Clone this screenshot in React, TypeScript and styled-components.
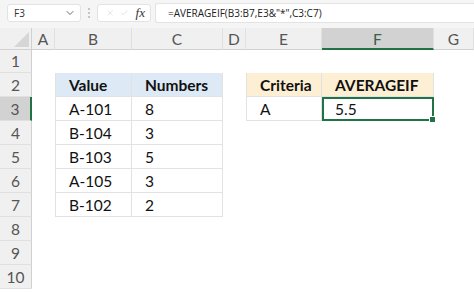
import React from 'react';
import styled, { createGlobalStyle } from 'styled-components';
import { ChevronDown, X, Check } from 'lucide-react';

const GlobalStyle = createGlobalStyle`
  html, body {
    margin: 0;
    padding: 0;
    background: #ffffff;
  }
  body {
    font-family: "Lato", "Open Sans", sans-serif;
    overflow: hidden;
  }
`;

const Window = styled.div`
  width: 474px;
  height: 292px;
  background: #ffffff;
  overflow: hidden;
`;

const Toolbar = styled.div`
  display: flex;
  align-items: center;
  height: 28px;
  padding: 0 0 0 7px;
  box-sizing: border-box;
  background: #f5f5f5;
`;

const NameBox = styled.div`
  display: flex;
  align-items: center;
  justify-content: space-between;
  width: 74px;
  height: 18px;
  box-sizing: border-box;
  padding: 0 4px 0 6px;
  background: #ffffff;
  border: 1px solid #e3e3e3;
  border-radius: 3px;
  font-family: "Open Sans", sans-serif;
  font-size: 10px;
  color: #333;
  margin-top: -2px;
`;

const Dots = styled.div`
  display: flex;
  flex-direction: column;
  gap: 2px;
  margin: -2px 7px 0 7px;

  span {
    width: 2px;
    height: 2px;
    background: #b5b5b5;
    border-radius: 1px;
  }
`;

const FuncBox = styled.div`
  display: flex;
  align-items: center;
  gap: 6px;
  width: 54px;
  height: 18px;
  box-sizing: border-box;
  padding: 0 5px 0 8px;
  background: #ffffff;
  border: 1px solid #e3e3e3;
  border-radius: 3px;
  color: #c2c2c2;
  margin-top: -2px;
`;

const Fx = styled.span`
  font-family: "Liberation Serif", serif;
  font-style: italic;
  font-size: 13px;
  color: #333;
  margin-left: 1px;
`;

const FormulaInput = styled.div`
  flex: 1;
  display: flex;
  align-items: center;
  height: 18px;
  margin-left: 4px;
  margin-top: -2px;
  padding-left: 12px;
  background: #ffffff;
  border: 1px solid #e3e3e3;
  border-right: none;
  border-radius: 3px 0 0 3px;
  font-family: "Open Sans", sans-serif;
  font-size: 10px;
  color: #222;
  white-space: nowrap;
`;

const Sheet = styled.div`
  display: grid;
  grid-template-columns: 32px 23px 77px 91px 23px 76px 112px 1fr;
  grid-template-rows: 22px 23px repeat(9, 24px);
`;

const Corner = styled.div`
  position: relative;
  background: #f0f0f0;
  border-bottom: 1px solid #d0d0d0;
  border-right: 1px solid #d0d0d0;
  box-sizing: border-box;

  &::after {
    content: '';
    position: absolute;
    right: 2px;
    bottom: 2px;
    width: 0;
    height: 0;
    border-left: 15px solid transparent;
    border-bottom: 15px solid #d6d6d6;
  }
`;

const ColHead = styled.div<{ $active?: boolean }>`
  display: flex;
  align-items: center;
  justify-content: center;
  box-sizing: border-box;
  background: ${(p) => (p.$active ? '#d2d2d2' : '#f0f0f0')};
  border-right: 1px solid #e0e0e0;
  border-bottom: ${(p) => (p.$active ? '2px solid #217346' : '1px solid #d0d0d0')};
  font-size: 15.5px;
  color: ${(p) => (p.$active ? '#3b5e48' : '#555')};
  padding-top: 1px;
`;

const RowHead = styled.div<{ $active?: boolean }>`
  display: flex;
  align-items: center;
  justify-content: center;
  box-sizing: border-box;
  background: ${(p) => (p.$active ? '#d2d2d2' : '#f0f0f0')};
  border-bottom: 1px solid #e0e0e0;
  border-right: ${(p) => (p.$active ? '2px solid #217346' : '1px solid #d0d0d0')};
  font-size: 15.5px;
  color: #555;
`;

type Tone = 'none' | 'blue' | 'orange' | 'plain';

const toneBg: Record<Tone, string> = {
  none: '#ffffff',
  blue: '#dde9f5',
  orange: '#fdefd3',
  plain: '#ffffff',
};

const Cell = styled.div<{ $tone: Tone; $bold?: boolean; $selected?: boolean; $first?: boolean }>`
  position: relative;
  display: flex;
  align-items: center;
  box-sizing: border-box;
  padding-left: 13px;
  background: ${(p) => toneBg[p.$tone]};
  font-size: 15.5px;
  font-weight: ${(p) => (p.$bold ? 700 : 400)};
  color: #111;
  border-left: ${(p) => (p.$first ? '1px solid #e2e2e2' : 'none')};
  border-right: ${(p) => (p.$tone === 'none' ? 'none' : '1px solid #e2e2e2')};
  border-bottom: ${(p) => (p.$tone === 'none' ? 'none' : '1px solid #e2e2e2')};
  ${(p) =>
    p.$selected &&
    `
    outline: 2px solid #217346;
    outline-offset: -2px;
    &::after {
      content: '';
      position: absolute;
      right: -3px;
      bottom: -3px;
      width: 5px;
      height: 5px;
      background: #217346;
      border: 1px solid #fff;
      z-index: 2;
    }
  `}
`;

const columns = ['A', 'B', 'C', 'D', 'E', 'F', 'G'];

const products: [string, string][] = [
  ['A-101', '8'],
  ['B-104', '3'],
  ['B-103', '5'],
  ['A-105', '3'],
  ['B-102', '2'],
];

const Blank = () => <Cell $tone="none" />;

const App: React.FC = () => {
  const rows: React.ReactNode[] = [];

  for (let r = 1; r <= 10; r++) {
    const cells: React.ReactNode[] = [];
    cells.push(
      <RowHead key={`h${r}`} $active={r === 3}>
        {r}
      </RowHead>
    );
    // column A
    cells.push(<Blank key={`a${r}`} />);

    // columns B & C
    if (r === 2) {
      cells.push(<Cell key="b2" $tone="blue" $bold $first>Value</Cell>);
      cells.push(<Cell key="c2" $tone="blue" $bold>Numbers</Cell>);
    } else if (r >= 3 && r <= 7) {
      const [v, n] = products[r - 3];
      cells.push(<Cell key={`b${r}`} $tone="plain" $first>{v}</Cell>);
      cells.push(<Cell key={`c${r}`} $tone="plain">{n}</Cell>);
    } else {
      cells.push(<Blank key={`b${r}`} />, <Blank key={`c${r}`} />);
    }

    // column D
    cells.push(<Blank key={`d${r}`} />);

    // columns E & F
    if (r === 2) {
      cells.push(<Cell key="e2" $tone="orange" $bold $first>Criteria</Cell>);
      cells.push(<Cell key="f2" $tone="orange" $bold>AVERAGEIF</Cell>);
    } else if (r === 3) {
      cells.push(<Cell key="e3" $tone="plain" $first>A</Cell>);
      cells.push(<Cell key="f3" $tone="plain" $selected>5.5</Cell>);
    } else {
      cells.push(<Blank key={`e${r}`} />, <Blank key={`f${r}`} />);
    }

    // column G
    cells.push(<Blank key={`g${r}`} />);
    rows.push(<React.Fragment key={`r${r}`}>{cells}</React.Fragment>);
  }

  return (
    <>
      <GlobalStyle />
      <Window>
        <Toolbar>
          <NameBox>
            <span>F3</span>
            <ChevronDown size={12} color="#444" strokeWidth={1.6} />
          </NameBox>
          <Dots>
            <span />
            <span />
            <span />
          </Dots>
          <FuncBox>
            <X size={14} strokeWidth={1.3} />
            <Check size={14} strokeWidth={1.3} />
            <Fx>fx</Fx>
          </FuncBox>
          <FormulaInput>=AVERAGEIF(B3:B7,E3&amp;"*",C3:C7)</FormulaInput>
        </Toolbar>
        <Sheet>
          <Corner />
          {columns.map((c) => (
            <ColHead key={c} $active={c === 'F'}>
              {c}
            </ColHead>
          ))}
          {rows}
        </Sheet>
      </Window>
    </>
  );
};

export default App;
